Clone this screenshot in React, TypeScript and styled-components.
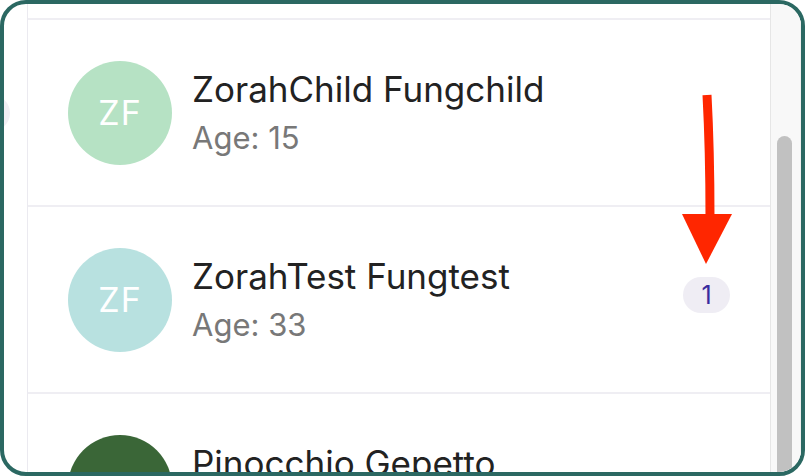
import React, { FunctionComponent } from "react";
import styled, { createGlobalStyle } from "styled-components";

const GlobalStyle = createGlobalStyle`
  html, body {
    margin: 0;
    padding: 0;
    background: #ffffff;
  }
  body {
    font-family: Inter, "Noto Sans", sans-serif;
  }
`;

const StyledFrame = styled.div`
  position: relative;
  box-sizing: border-box;
  width: 805px;
  height: 476px;
  border: 4px solid #2b6862;
  border-radius: 26px;
  overflow: hidden;
  background: #ffffff;
  display: flex;
`;

const StyledGutter = styled.div`
  position: relative;
  width: 23px;
  flex-shrink: 0;
`;

const StyledPeek = styled.span`
  position: absolute;
  left: -30px;
  top: 91px;
  width: 36px;
  height: 36px;
  border-radius: 50%;
  background: #f1eff4;
`;

const StyledList = styled.div`
  flex: 1;
  border-left: 1px solid #ebeaf0;
  border-right: 1px solid #e6e6e6;
  padding-top: 14px;
  overflow: hidden;
`;

const StyledRow = styled.div`
  display: flex;
  align-items: center;
  height: 185px;
  padding: 0 40px;
  border-top: 2px solid #efeef3;
  flex-shrink: 0;
`;

const StyledAvatar = styled.div<{ $bg: string }>`
  width: 104px;
  height: 104px;
  border-radius: 50%;
  background: ${(p) => p.$bg};
  color: #ffffff;
  display: flex;
  align-items: center;
  justify-content: center;
  font-size: 34px;
  letter-spacing: 1px;
  flex-shrink: 0;
`;

const StyledInfo = styled.div`
  flex: 1;
  margin-left: 20px;
  display: flex;
  flex-direction: column;
  gap: 11px;
`;

const StyledName = styled.div`
  font-size: 35px;
  line-height: 40px;
  color: #222222;
  white-space: nowrap;
`;

const StyledAge = styled.div`
  font-size: 31px;
  line-height: 36px;
  color: #787878;
`;

const StyledBadge = styled.span`
  box-sizing: border-box;
  min-width: 47px;
  height: 36px;
  padding: 0 12px;
  border-radius: 18px;
  background: #efedf4;
  color: #3a2c9e;
  font-size: 25px;
  line-height: 36px;
  text-align: center;
  margin-bottom: 10px;
  flex-shrink: 0;
`;

const StyledTrack = styled.div`
  width: 30px;
  flex-shrink: 0;
  background: #f8f8f8;
  padding-top: 132px;
  padding-left: 6px;
  box-sizing: border-box;
  border-right: 1px solid #efefef;
`;

const StyledThumb = styled.div`
  width: 15px;
  height: 400px;
  border-radius: 8px;
  background: #c1c1c1;
`;

const StyledArrow = styled.svg`
  position: absolute;
  left: -4px;
  top: -4px;
  pointer-events: none;
`;

type Person = {
  initials: string;
  name: string;
  age: number;
  color: string;
  unread?: number;
};

const people: Person[] = [
  { initials: "ZF", name: "ZorahChild Fungchild", age: 15, color: "#b6e2c4" },
  { initials: "ZF", name: "ZorahTest Fungtest", age: 33, color: "#b8e1e0", unread: 1 },
  { initials: "PG", name: "Pinocchio Gepetto", age: 40, color: "#3a6637" }
];

const PersonRow: FunctionComponent<{ person: Person }> = ({ person }) => (
  <StyledRow>
    <StyledAvatar $bg={person.color}>{person.initials}</StyledAvatar>
    <StyledInfo>
      <StyledName>{person.name}</StyledName>
      <StyledAge>Age: {person.age}</StyledAge>
    </StyledInfo>
    {person.unread ? <StyledBadge>{person.unread}</StyledBadge> : null}
  </StyledRow>
);

const App: FunctionComponent = () => (
  <>
    <GlobalStyle />
    <StyledFrame>
      <StyledGutter>
        <StyledPeek />
      </StyledGutter>
      <StyledList>
        {people.map((p) => (
          <PersonRow key={p.name} person={p} />
        ))}
      </StyledList>
      <StyledTrack>
        <StyledThumb />
      </StyledTrack>
      <StyledArrow width="805" height="476" viewBox="0 0 805 476">
        <path d="M707 95 Q710 150 710 218" stroke="#ff2600" strokeWidth="9" fill="none" />
        <polygon points="682,214 732,214 706,264" fill="#ff2600" />
      </StyledArrow>
    </StyledFrame>
  </>
);

export default App;
